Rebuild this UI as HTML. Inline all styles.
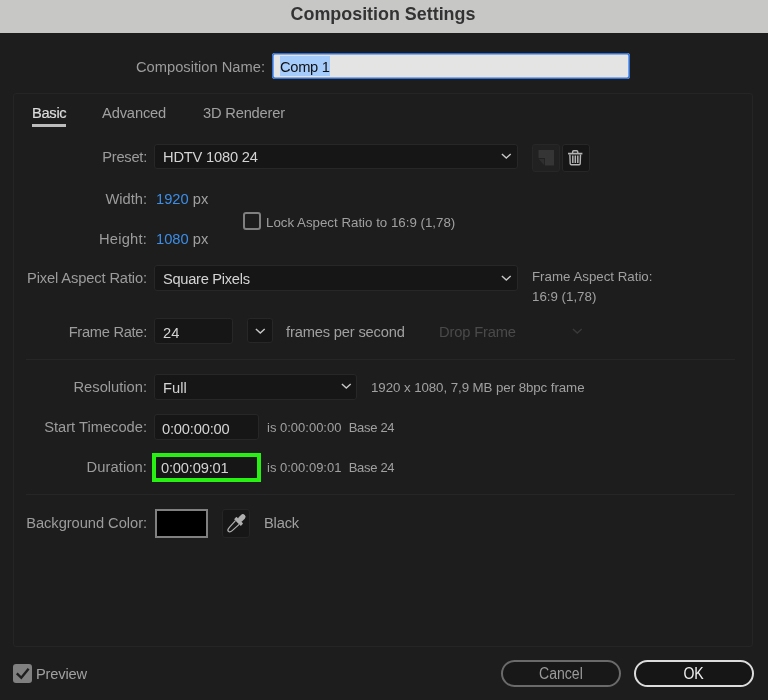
<!DOCTYPE html>
<html><head><meta charset="utf-8">
<style>
*{box-sizing:border-box;margin:0;padding:0}
html,body{width:768px;height:700px;overflow:hidden;background:#1d1d1d}
body{position:relative;font-family:"Liberation Sans",sans-serif;font-size:14.7px;color:#a0a0a0}
#wrap{position:absolute;left:0;top:0;width:768px;height:700px;will-change:transform;transform:translateZ(0)}
.abs{position:absolute;white-space:nowrap}
#title{left:0;top:0;width:768px;height:33px;background:#c7c7c6;color:#333;font-weight:bold;font-size:17.9px;text-align:center;line-height:28px;padding-right:2px}
.lbl{position:absolute;white-space:nowrap;color:#9c9c9c;height:20px;line-height:20px;transform-origin:100% 50%}
.txt{position:absolute;white-space:nowrap;height:20px;line-height:20px;transform-origin:0 50%}
.field{position:absolute;background:#161616;border:1px solid #272727;border-radius:3px;color:#d4d4d4;padding-left:8px;white-space:nowrap}
.sm{font-size:13.3px}
.bt{display:inline-block;transform:scaleX(0.88);transform-origin:50% 50%}
</style></head><body><div id="wrap">
<div id="title" class="abs">Composition Settings</div>

<div class="lbl" style="right:503px;top:57px">Composition Name:</div>
<div class="abs" style="left:272px;top:53px;width:358px;height:26px;background:#e4e4e4;box-shadow:inset 0 0 0 1.6px #2f72de;border-radius:3px"></div>
<div class="abs" style="left:280px;top:56px;width:50px;height:20px;background:#a6ccfc"></div>
<div class="txt" style="left:280px;top:56.5px;color:#111;letter-spacing:-0.3px">Comp 1</div>

<div class="abs" style="left:13px;top:93px;width:740px;height:554px;border:1px solid #252525;border-radius:3px"></div>

<div class="txt" style="left:32px;top:103px;color:#dcdcdc;letter-spacing:-0.3px;-webkit-text-stroke:0.2px #dcdcdc">Basic</div>
<div class="abs" style="left:32px;top:124px;width:34px;height:3px;background:#bcbcbc"></div>
<div class="txt" style="left:102px;top:103px;letter-spacing:-0.15px">Advanced</div>
<div class="txt" style="left:203px;top:103px;letter-spacing:-0.2px">3D Renderer</div>

<div class="lbl" style="right:621px;top:147px;letter-spacing:-0.25px">Preset:</div>
<div class="field" style="left:154px;top:144px;width:364px;height:25px;line-height:24px"><span style="letter-spacing:-0.2px">HDTV 1080 24</span></div>
<svg class="abs" style="left:500px;top:152px" width="13" height="8" viewBox="0 0 13 8"><path d="M1.9 2 L6.3 6.1 L10.7 2" fill="none" stroke="#c8c8c8" stroke-width="1.4"/></svg>
<div class="abs" style="left:532px;top:144px;width:28px;height:28px;background:#212121;border:1px solid #272727;border-radius:3px"></div>
<svg class="abs" style="left:532px;top:144px" width="28" height="28" viewBox="0 0 28 28"><path d="M6.5 6.1 H22 V21.6 H12.9 V14.1 H6.5 Z" fill="#353535"/><path d="M6.7 15 H12.2 V21.3 Z" fill="#2f2f2f"/></svg>
<div class="abs" style="left:562px;top:144px;width:28px;height:28px;background:#161616;border:1px solid #272727;border-radius:3px"></div>
<svg class="abs" style="left:562px;top:144px" width="28" height="28" viewBox="0 0 28 28" fill="none" stroke="#b4b4b4"><path d="M10.6 9 V8 Q10.6 6.8 11.8 6.8 H14.6 Q15.8 6.8 15.8 8 V9" stroke-width="1.4"/><path d="M6 9.6 H20.4" stroke-width="1.7"/><path d="M7.9 10.5 L8.2 19.8 Q8.3 20.8 9.3 20.8 H17.1 Q18.1 20.8 18.2 19.8 L18.5 10.5" stroke-width="1.4"/><path d="M10.8 11.6 V19 M13.3 11.6 V19 M15.8 11.6 V19" stroke-width="1.5"/></svg>

<div class="lbl" style="right:621px;top:189px">Width:</div>
<div class="txt" style="left:156px;top:189px"><span style="color:#3b8ee8">1920</span> px</div>
<div class="lbl" style="right:621px;top:229px;letter-spacing:0.2px">Height:</div>
<div class="txt" style="left:156px;top:229px"><span style="color:#3b8ee8">1080</span> px</div>
<div class="abs" style="left:243px;top:212px;width:18px;height:18px;border:2px solid #808080;border-radius:3px"></div>
<div class="txt sm" style="left:266px;top:213px">Lock Aspect Ratio to 16:9 (1,78)</div>

<div class="lbl" style="right:621px;top:268px;letter-spacing:-0.13px">Pixel Aspect Ratio:</div>
<div class="field" style="left:154px;top:265px;width:364px;height:26px;line-height:26px"><span style="letter-spacing:-0.3px">Square Pixels</span></div>
<svg class="abs" style="left:500px;top:274px" width="13" height="8" viewBox="0 0 13 8"><path d="M1.9 2 L6.3 6.1 L10.7 2" fill="none" stroke="#c8c8c8" stroke-width="1.4"/></svg>
<div class="txt sm" style="left:532px;top:267px">Frame Aspect Ratio:</div>
<div class="txt sm" style="left:532px;top:287px">16:9 (1,78)</div>

<div class="lbl" style="right:621px;top:322px;letter-spacing:-0.3px">Frame Rate:</div>
<div class="field" style="left:154px;top:318px;width:79px;height:26px;line-height:29px"><span>24</span></div>
<div class="abs" style="left:247px;top:318px;width:26px;height:25px;background:#161616;border:1px solid #272727;border-radius:3px"></div>
<svg class="abs" style="left:254px;top:327px" width="13" height="8" viewBox="0 0 13 8"><path d="M1.9 2 L6.3 6.1 L10.7 2" fill="none" stroke="#c8c8c8" stroke-width="1.4"/></svg>
<div class="txt" style="left:286px;top:322px;letter-spacing:-0.17px">frames per second</div>
<div class="txt" style="left:439px;top:322px;color:#4a4a4a;letter-spacing:-0.15px">Drop Frame</div>
<svg class="abs" style="left:571px;top:327px" width="13" height="8" viewBox="0 0 13 8"><path d="M1.9 2 L6.3 6.1 L10.7 2" fill="none" stroke="#3a3a3a" stroke-width="1.4"/></svg>

<div class="abs" style="left:26px;top:359px;width:709px;height:1px;background:#262626"></div>

<div class="lbl" style="right:621px;top:377px">Resolution:</div>
<div class="field" style="left:154px;top:374px;width:203px;height:26px;line-height:26px"><span>Full</span></div>
<svg class="abs" style="left:340px;top:382px" width="13" height="8" viewBox="0 0 13 8"><path d="M1.9 2 L6.3 6.1 L10.7 2" fill="none" stroke="#c8c8c8" stroke-width="1.4"/></svg>
<div class="txt sm" style="left:371px;top:378px;letter-spacing:-0.07px">1920 x 1080, 7,9 MB per 8bpc frame</div>

<div class="lbl" style="right:621px;top:417px">Start Timecode:</div>
<div class="field" style="left:154px;top:414px;width:105px;height:26px;line-height:29px;padding-left:7px;letter-spacing:-0.19px"><span>0:00:00:00</span></div>
<div class="txt sm" style="left:267px;top:418px;font-size:13px">is 0:00:00:00&nbsp; <span style="letter-spacing:-0.3px">Base 24</span></div>

<div class="lbl" style="right:621px;top:457px;letter-spacing:0.1px">Duration:</div>
<div class="abs" style="left:152px;top:453px;width:109px;height:29px;border:4px solid #29f013;background:#161616"></div>
<div class="txt" style="left:161px;top:458px;color:#d4d4d4;letter-spacing:-0.19px">0:00:09:01</div>
<div class="txt sm" style="left:267px;top:458px;font-size:13px">is 0:00:09:01&nbsp; <span style="letter-spacing:-0.3px">Base 24</span></div>

<div class="abs" style="left:26px;top:494px;width:709px;height:1px;background:#262626"></div>

<div class="lbl" style="right:621px;top:513px;letter-spacing:-0.05px">Background Color:</div>
<div class="abs" style="left:155px;top:509px;width:53px;height:29px;background:#000;border:2px solid #808080"></div>
<div class="abs" style="left:222px;top:509px;width:28px;height:29px;background:#171717;border:1px solid #252525;border-radius:3px"></div>
<svg class="abs" style="left:222px;top:509px" width="28" height="29" viewBox="0 0 28 29"><g transform="translate(14.6 14.2) rotate(45)"><rect x="-2.65" y="-11.5" width="5.3" height="8.5" rx="2.6" fill="#b0b0b0"/><rect x="-4.6" y="-4.4" width="9.5" height="3.4" rx="0.7" fill="#b0b0b0"/><path d="M-2.6 -1 L-2.2 8 Q-2.1 11.6 0 11.6 Q2.1 11.6 2.2 8 L2.6 -1" fill="none" stroke="#b0b0b0" stroke-width="1.2"/></g></svg>
<div class="txt" style="left:264px;top:512.5px;letter-spacing:-0.2px">Black</div>

<div class="abs" style="left:13px;top:664px;width:19px;height:19px;background:#808080;border-radius:3px"></div>
<svg class="abs" style="left:13px;top:664px" width="19" height="19" viewBox="0 0 19 19"><path d="M3.8 9.4 L8.3 13.8 L15.6 4.8" fill="none" stroke="#1e1e1e" stroke-width="2.4"/></svg>
<div class="txt" style="left:36px;top:664px;letter-spacing:-0.2px">Preview</div>

<div class="abs" style="left:501px;top:660px;width:120px;height:27px;border:2px solid #6a6a6a;border-radius:14px;text-align:center;line-height:23px;color:#9a9a9a;font-size:16px;background:#181818"><span class="bt">Cancel</span></div>
<div class="abs" style="left:634px;top:660px;width:120px;height:27px;border:2px solid #dcdcdc;border-radius:14px;text-align:center;line-height:23px;color:#f0f0f0;font-size:16px;background:#161616"><span class="bt">OK</span></div>
</div></body></html>
